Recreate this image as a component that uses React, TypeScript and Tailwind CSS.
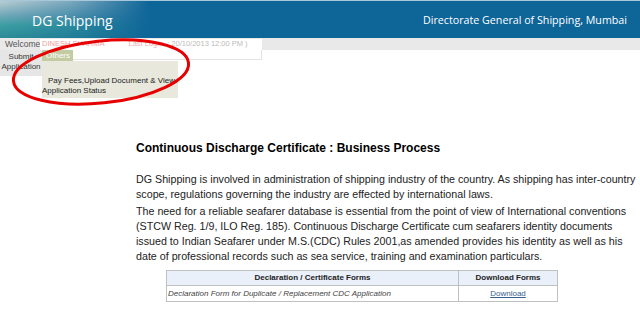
import React from 'react';

const App: React.FC = () => {
  return (
    <div className="relative w-[640px] h-[313px] overflow-hidden bg-white font-['Liberation_Sans',Arial,sans-serif]">
      {/* Header */}
      <div className="h-[38px] flex items-center justify-between border-t border-[#a7c7da] bg-[linear-gradient(to_right,rgba(14,101,152,0)_0px,rgba(14,101,152,0.35)_70px,#0e6598_150px),linear-gradient(to_bottom,#b9cdd3_0%,#6fa7b7_40%,#3d9fa3_65%,#2c8b96_100%)]">
        <div className="pl-[32px] pt-[2px] text-white text-[14px] font-['Open_Sans',sans-serif]">DG Shipping</div>
        <div className="pr-[13px] pt-[2px] text-white text-[10.7px] font-['Open_Sans',sans-serif]">Directorate General of Shipping, Mumbai</div>
      </div>

      {/* Welcome bar */}
      <div className="h-[12px] flex items-center bg-[#e9e9e9] text-[8.5px] leading-none">
        <span className="pl-[5px] w-[40px] text-[#555]">Welcome</span>
        <div className="w-[222px] h-[11px] bg-white flex items-center pl-[2px] text-[7.5px] whitespace-nowrap">
          <span className="text-[#f0a0a0]">DINESH SHARMA</span>
          <span className="ml-[24px] text-[#e8b4b4]">Last Login</span>
          <span className="ml-[4px] text-[#bbbbbb]">: 20/10/2013 12:00 PM )</span>
        </div>
      </div>

      {/* Menu */}
      <div className="flex items-start text-[8px] leading-[10px]">
        <div className="w-[42px] h-[26px] bg-[#e6e6e6] text-[#333] text-center pt-[2px] whitespace-nowrap overflow-hidden flex flex-col items-center">
          <span>Submit</span>
          <span>Application</span>
        </div>
        <div className="flex flex-col">
          <div className="flex">
            <div className="w-[31px] h-[11px] bg-[#c3cba3] text-white pl-[4px] leading-[11px]">Others</div>
            <div className="w-[189px] h-[10px] bg-white border-b border-r border-[#e4e4e4]"></div>
          </div>
          <div className="w-[136px] h-[37px] bg-[#e8e8dd] text-[#222] pt-[15px]">
            <div className="pl-[6px] whitespace-nowrap">Pay Fees,Upload Document &amp; View</div>
            <div className="whitespace-nowrap">Application Status</div>
          </div>
        </div>
      </div>

      {/* Annotation ellipse */}
      <svg className="absolute left-0 top-0 pointer-events-none" width="640" height="313">
        <ellipse cx="101" cy="72" rx="88" ry="31" transform="rotate(-6 101 72)" fill="none" stroke="#e60000" strokeWidth="3" />
      </svg>

      {/* Content */}
      <div className="pl-[136px] pr-[2px] pt-[42px] text-[#222]">
        <h1 className="text-[12px] font-bold text-black leading-[16px]">Continuous Discharge Certificate : Business Process</h1>
        <p className="mt-[16px] text-[10.7px] leading-[15px]">
          DG Shipping is involved in administration of shipping industry of the country. As shipping has inter-country scope, regulations governing the industry are effected by international laws.
        </p>
        <p className="mt-[2px] text-[10.7px] leading-[15px]">
          The need for a reliable seafarer database is essential from the point of view of International conventions (STCW Reg. 1/9, ILO Reg. 185). Continuous Discharge Certificate cum seafarers identity documents issued to Indian Seafarer under M.S.(CDC) Rules 2001,as amended provides his identity as well as his date of professional records such as sea service, training and examination particulars.
        </p>
        <table className="mt-[6px] ml-[30px] w-[392px] border-collapse border border-[#b8b8b8] text-[8px]">
          <tbody>
            <tr className="h-[15px] bg-[#eaf0fa]">
              <th className="border border-[#c0c0c0] font-bold text-[#222] w-[292px]">Declaration / Certificate Forms</th>
              <th className="border border-[#c0c0c0] font-bold text-[#222]">Download Forms</th>
            </tr>
            <tr className="h-[16px]">
              <td className="border border-[#c0c0c0] italic text-[#444] pl-[1px]">Declaration Form for Duplicate / Replacement CDC Application</td>
              <td className="border border-[#c0c0c0] text-center">
                <a className="text-[#3a5f8f] underline">Download</a>
              </td>
            </tr>
          </tbody>
        </table>
      </div>
    </div>
  );
};

export default App;
